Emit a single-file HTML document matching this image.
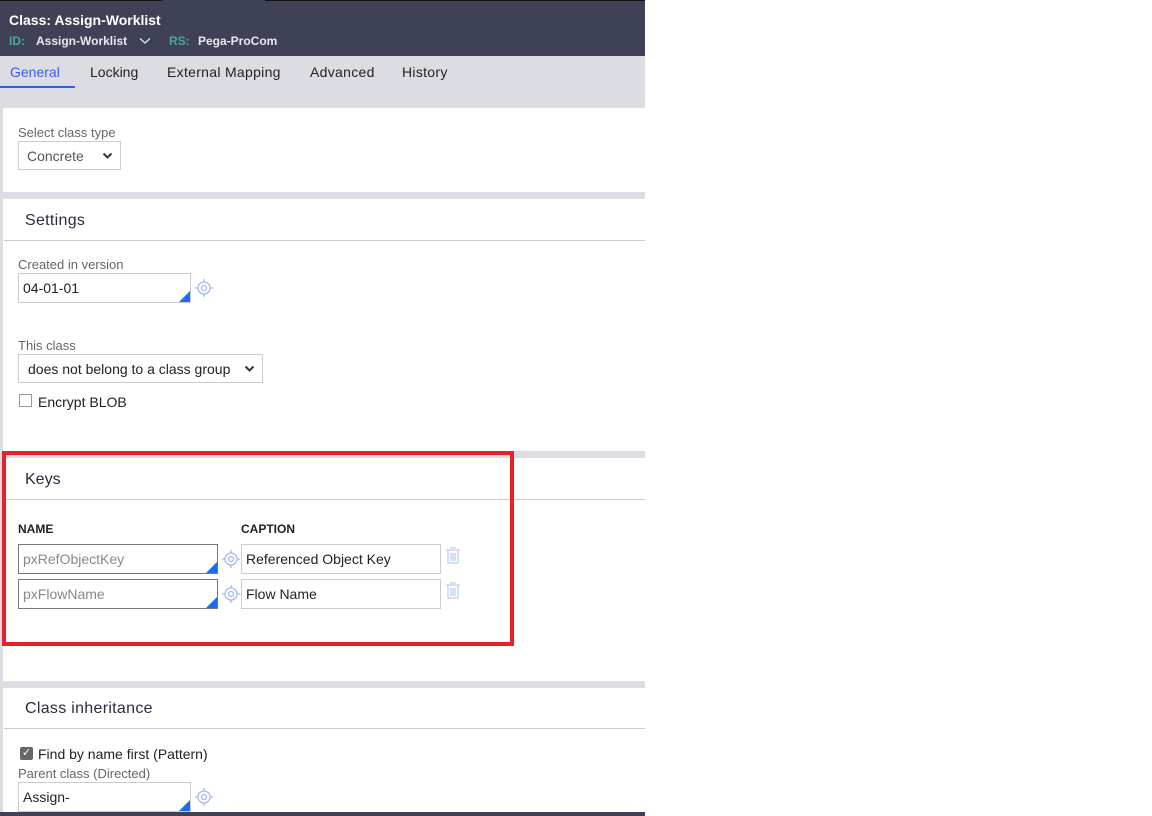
<!DOCTYPE html>
<html><head><style>
*{margin:0;padding:0;box-sizing:border-box}
body{width:1152px;height:816px;background:#fff;font-family:"Liberation Sans",sans-serif;position:relative;overflow:hidden;color:#333}
.a{position:absolute}
.lbl{font-size:13px;color:#666}
.inp{position:absolute;border:1px solid #ccc;background:#fff;font-size:14px;padding-left:4px;display:flex;align-items:center;color:#222}
.inp.dk{border-color:#777}
.tri{position:absolute;right:0;bottom:0;width:0;height:0;border-left:11px solid transparent;border-bottom:11px solid #1a6cf0}
.h{position:absolute;font-size:16px;color:#2b2b40}
.line{position:absolute;height:1px;background:#ccc;left:4px;width:641px}
.tg{position:absolute;width:18px;height:18px}
.chev{position:absolute;right:7px;top:10px}
</style></head><body>
<div class="a" style="left:0;top:0;width:645px;height:816px;background:#dcdde2"></div>
<div class="a" style="left:0;top:0;width:645px;height:56px;background:#3f4256"></div>
<div class="a" style="left:0;top:0;width:162px;height:1px;background:#111"></div>
<div class="a" style="left:265px;top:0;width:380px;height:1px;background:#111"></div>
<div class="a" style="left:9px;top:12px;font-size:14px;font-weight:bold;color:#fff">Class: Assign-Worklist</div>
<div class="a" style="left:9px;top:34px;font-size:12px;font-weight:bold;color:#4aa5a5">ID:</div>
<div class="a" style="left:36px;top:34px;font-size:12px;font-weight:bold;color:#e8e8f0">Assign-Worklist</div>
<svg class="a" style="left:139px;top:37px" width="12" height="8"><path d="M1 1.5l5 4.5 5-4.5" fill="none" stroke="#e8e8f0" stroke-width="1.3"/></svg>
<div class="a" style="left:169px;top:34px;font-size:12px;font-weight:bold;color:#4aa5a5">RS:</div>
<div class="a" style="left:198px;top:34px;font-size:12px;font-weight:bold;color:#e8e8f0">Pega-ProCom</div>
<div class="a" style="left:10px;top:64px;font-size:14px;color:#3a5fe0">General</div>
<div class="a" style="left:0;top:86px;width:75px;height:2px;background:#2f5ef0"></div>
<div class="a" style="left:90px;top:64px;font-size:14px;color:#222">Locking</div>
<div class="a" style="left:167px;top:64px;font-size:14px;color:#222;letter-spacing:0.3px">External Mapping</div>
<div class="a" style="left:310px;top:64px;font-size:14px;color:#222;letter-spacing:0.3px">Advanced</div>
<div class="a" style="left:402px;top:64px;font-size:14px;color:#222;letter-spacing:0.3px">History</div>

<div class="a" style="left:3px;top:108px;width:642px;height:84px;background:#fff"></div>
<div class="a lbl" style="left:18px;top:125px">Select class type</div>
<div class="inp" style="left:18px;top:141px;width:103px;height:29px;color:#555;padding-left:8px">Concrete<svg class="chev" width="11" height="8"><path d="M1.5 1.5l4 4 4-4" fill="none" stroke="#333" stroke-width="2"/></svg></div>

<div class="a" style="left:3px;top:199px;width:642px;height:252px;background:#fff"></div>
<div class="h" style="left:25px;top:212px;letter-spacing:0.3px">Settings</div>
<div class="line" style="top:240px"></div>
<div class="a lbl" style="left:18px;top:257px">Created in version</div>
<div class="inp" style="left:18px;top:273px;width:173px;height:30px">04-01-01<div class="tri"></div></div>
<svg class="tg" style="left:195px;top:279px" viewBox="0 0 18 18"><g fill="none" stroke="#a8b8f0" stroke-width="1.3"><circle cx="9" cy="9" r="6"/><circle cx="9" cy="9" r="2.5"/><path d="M9 0v3M9 15v3M0 9h3M15 9h3"/></g></svg>
<div class="a lbl" style="left:18px;top:338px">This class</div>
<div class="inp" style="left:18px;top:354px;width:245px;height:29px;padding-left:9px">does not belong to a class group<svg class="chev" width="11" height="8"><path d="M1.5 1.5l4 4 4-4" fill="none" stroke="#333" stroke-width="2"/></svg></div>
<div class="a" style="left:19px;top:394px;width:13px;height:13px;border:1px solid #999;background:#fff"></div>
<div class="a" style="left:38px;top:394px;font-size:14px;color:#222">Encrypt BLOB</div>

<div class="a" style="left:3px;top:458px;width:642px;height:223px;background:#fff"></div>
<div class="h" style="left:25px;top:471px">Keys</div>
<div class="line" style="top:499px"></div>
<div class="a" style="left:18px;top:522px;font-size:12px;font-weight:bold;color:#222">NAME</div>
<div class="a" style="left:241px;top:522px;font-size:12px;font-weight:bold;color:#222">CAPTION</div>
<div class="inp dk" style="left:18px;top:544px;width:200px;height:30px;color:#888">pxRefObjectKey<div class="tri"></div></div>
<div class="inp dk" style="left:18px;top:579px;width:200px;height:30px;color:#888">pxFlowName<div class="tri"></div></div>
<div class="inp" style="left:241px;top:544px;width:200px;height:30px">Referenced Object Key</div>
<div class="inp" style="left:241px;top:579px;width:200px;height:30px">Flow Name</div>
<svg class="tg" style="left:222px;top:550px" viewBox="0 0 18 18"><g fill="none" stroke="#a8b8f0" stroke-width="1.3"><circle cx="9" cy="9" r="6"/><circle cx="9" cy="9" r="2.5"/><path d="M9 0v3M9 15v3M0 9h3M15 9h3"/></g></svg>
<svg class="tg" style="left:222px;top:585px" viewBox="0 0 18 18"><g fill="none" stroke="#a8b8f0" stroke-width="1.3"><circle cx="9" cy="9" r="6"/><circle cx="9" cy="9" r="2.5"/><path d="M9 0v3M9 15v3M0 9h3M15 9h3"/></g></svg>
<svg class="a" style="left:445px;top:546px" width="16" height="19"><g fill="none" stroke="#c0ccf5" stroke-width="1.3"><path d="M5 2h6M1 4h14M3 4v13h10V4M6 7v8M8 7v8M10 7v8"/></g></svg>
<svg class="a" style="left:445px;top:581px" width="16" height="19"><g fill="none" stroke="#c0ccf5" stroke-width="1.3"><path d="M5 2h6M1 4h14M3 4v13h10V4M6 7v8M8 7v8M10 7v8"/></g></svg>
<div class="a" style="left:2px;top:451px;width:512px;height:195px;border:4px solid #e8202a"></div>

<div class="a" style="left:3px;top:688px;width:642px;height:124px;background:#fff"></div>
<div class="h" style="left:25px;top:700px;letter-spacing:0.3px">Class inheritance</div>
<div class="line" style="top:728px"></div>
<div class="a" style="left:20px;top:747px;width:13px;height:13px;background:#666;border-radius:2px;color:#fff;font-size:11px;line-height:13px;text-align:center">✓</div>
<div class="a" style="left:38px;top:746px;font-size:14px;color:#222">Find by name first (Pattern)</div>
<div class="a lbl" style="left:18px;top:766px">Parent class (Directed)</div>
<div class="inp" style="left:18px;top:782px;width:173px;height:30px">Assign-<div class="tri"></div></div>
<svg class="tg" style="left:195px;top:788px" viewBox="0 0 18 18"><g fill="none" stroke="#a8b8f0" stroke-width="1.3"><circle cx="9" cy="9" r="6"/><circle cx="9" cy="9" r="2.5"/><path d="M9 0v3M9 15v3M0 9h3M15 9h3"/></g></svg>
<div class="a" style="left:0;top:812px;width:645px;height:4px;background:#3f4256"></div>
</body></html>
